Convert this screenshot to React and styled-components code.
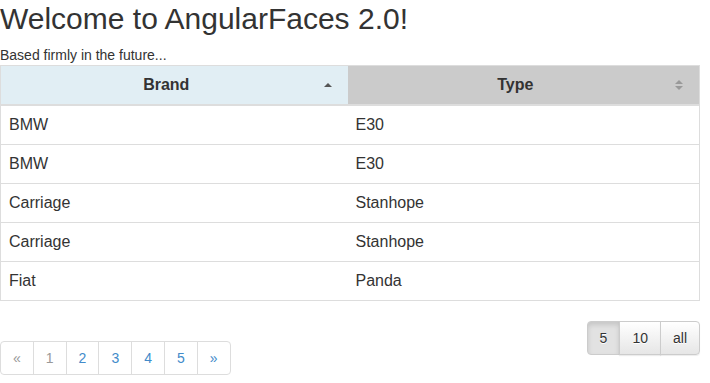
import React from 'react';
import styled, { createGlobalStyle } from 'styled-components';

const GlobalStyle = createGlobalStyle`
  body {
    margin: 0;
    font-family: "Liberation Sans", Arial, sans-serif;
    font-size: 14px;
    line-height: 20px;
    color: #333;
    background: #fff;
  }
`;

const cars = [
  { brand: 'BMW', type: 'E30' },
  { brand: 'BMW', type: 'E30' },
  { brand: 'Carriage', type: 'Stanhope' },
  { brand: 'Carriage', type: 'Stanhope' },
  { brand: 'Fiat', type: 'Panda' },
];

function SortIcon({ dir }) {
  if (dir === 'asc') {
    return (
      <svg width="8" height="5" viewBox="0 0 8 5">
        <path d="M0 4.5 L4 0.5 L8 4.5 Z" fill="#555" />
      </svg>
    );
  }
  return (
    <svg width="8" height="11" viewBox="0 0 8 11">
      <path d="M0 4.5 L4 0.5 L8 4.5 Z" fill="#999" />
      <path d="M0 6.5 L4 10.5 L8 6.5 Z" fill="#999" />
    </svg>
  );
}

function App() {
  const pages = ['1', '2', '3', '4', '5'];
  return (
    <Page>
      <GlobalStyle />
      <Title>Welcome to AngularFaces 2.0!</Title>
      <Lead>Based firmly in the future...</Lead>
      <Table>
        <thead>
          <tr>
            <Th $sorted $width={347}>
              Brand
              <IconSlot>
                <SortIcon dir="asc" />
              </IconSlot>
            </Th>
            <Th>
              Type
              <IconSlot>
                <SortIcon />
              </IconSlot>
            </Th>
          </tr>
        </thead>
        <tbody>
          {cars.map((car, i) => (
            <tr key={i}>
              <Td>{car.brand}</Td>
              <Td>{car.type}</Td>
            </tr>
          ))}
        </tbody>
      </Table>
      <Footer>
        <Pagination>
          <PageItem $muted>«</PageItem>
          {pages.map((p) => (
            <PageItem key={p} $muted={p === '1'}>
              {p}
            </PageItem>
          ))}
          <PageItem>»</PageItem>
        </Pagination>
        <BtnGroup>
          <Btn $active>5</Btn>
          <Btn>10</Btn>
          <Btn>all</Btn>
        </BtnGroup>
      </Footer>
    </Page>
  );
}

const Page = styled.div`
  width: 700px;
`;

const Title = styled.h1`
  margin: 2px 0 10px;
  font-size: 30px;
  font-weight: 400;
  line-height: 33px;
  color: #333;
`;

const Lead = styled.p`
  margin: 0;
  font-size: 14px;
  line-height: 20px;
`;

const Table = styled.table`
  width: 700px;
  border-collapse: collapse;
  border: 1px solid #ddd;
  font-size: 16px;
`;

const Th = styled.th`
  position: relative;
  box-sizing: border-box;
  width: ${(p) => (p.$width ? `${p.$width}px` : 'auto')};
  padding: 8px 24px 8px 8px;
  line-height: 22px;
  font-weight: 700;
  text-align: center;
  background: ${(p) => (p.$sorted ? '#e1eef4' : '#cbcbcb')};
  border-bottom: 2px solid #ddd;
`;

const IconSlot = styled.span`
  position: absolute;
  right: 16px;
  top: 50%;
  transform: translateY(-50%);
  display: flex;
`;

const Td = styled.td`
  padding: 8px;
  line-height: 22px;
  border-top: 1px solid #ddd;
`;

const Footer = styled.div`
  display: flex;
  justify-content: space-between;
  align-items: flex-start;
`;

const Pagination = styled.ul`
  display: flex;
  margin: 40px 0 0;
  padding: 0;
  list-style: none;
`;

const PageItem = styled.li`
  padding: 6px 12px;
  line-height: 20px;
  font-size: 14px;
  color: ${(p) => (p.$muted ? '#999' : '#428bca')};
  background: #fff;
  border: 1px solid #ddd;
  margin-left: -1px;
  cursor: pointer;

  &:first-child {
    margin-left: 0;
    border-radius: 4px 0 0 4px;
  }
  &:last-child {
    border-radius: 0 4px 4px 0;
  }
`;

const BtnGroup = styled.div`
  display: flex;
  margin-top: 20px;
`;

const Btn = styled.button`
  font-family: inherit;
  font-size: 14px;
  line-height: 20px;
  padding: 6px 12px;
  color: #333;
  margin-left: -1px;
  border: 1px solid #ccc;
  text-shadow: 0 1px 0 #fff;
  background: ${(p) =>
    p.$active ? '#e2e2e2' : 'linear-gradient(to bottom, #fff 0, #e6e6e6 100%)'};
  box-shadow: ${(p) =>
    p.$active
      ? 'inset 0 3px 5px rgba(0, 0, 0, 0.125)'
      : 'inset 0 1px 0 rgba(255, 255, 255, 0.15), 0 1px 1px rgba(0, 0, 0, 0.075)'};
  border-radius: 0;

  &:first-child {
    margin-left: 0;
    border-radius: 4px 0 0 4px;
  }
  &:last-child {
    border-radius: 0 4px 4px 0;
  }
`;

export default App;
